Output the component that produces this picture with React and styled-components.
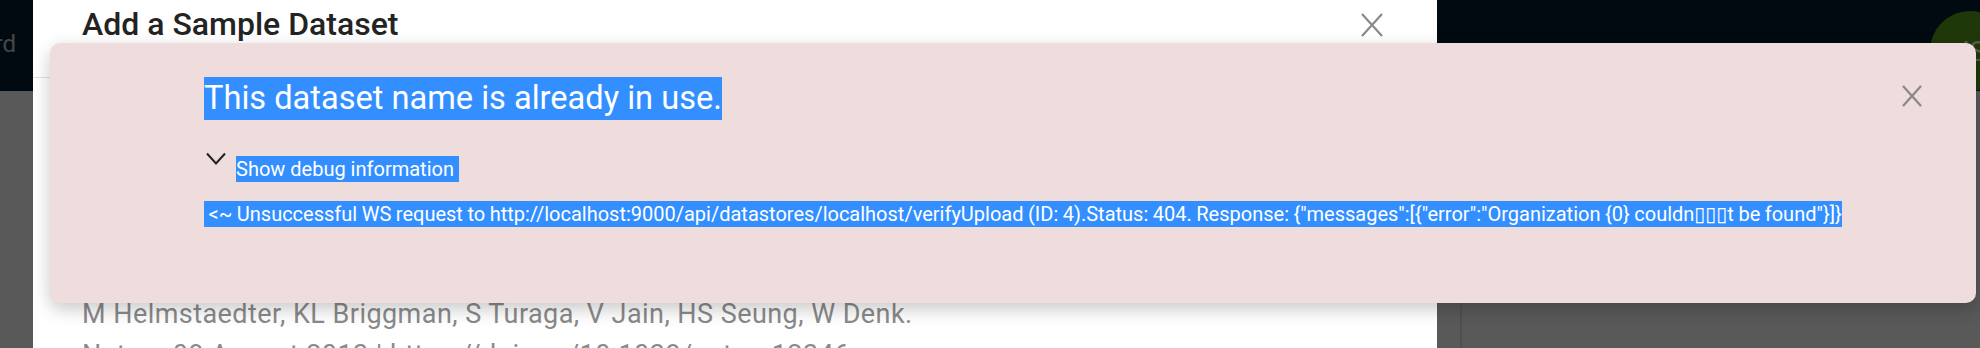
import React from "react";
import styled, { createGlobalStyle } from "styled-components";

const GlobalStyle = createGlobalStyle`
  html, body {
    margin: 0;
    padding: 0;
    overflow: hidden;
    background: #ffffff;
    font-family: Roboto, "Noto Sans", "DejaVu Sans", sans-serif;
  }
`;

const Page = styled.div`
  position: relative;
  width: 1980px;
  height: 348px;
  overflow: hidden;
  display: flex;
  flex-direction: column;
`;

const Navbar = styled.header`
  height: 91px;
  flex: none;
  background: #061d33;
  display: flex;
  align-items: flex-start;
  position: relative;
`;

const NavLinkBox = styled.div`
  width: 16px;
  display: flex;
  justify-content: flex-end;
  padding-top: 30px;
`;

const NavLink = styled.span`
  white-space: nowrap;
  font-size: 24px;
  line-height: 28px;
  color: #c4cad2;
`;

const Avatar = styled.div`
  position: absolute;
  left: 1930px;
  top: 11px;
  width: 80px;
  height: 80px;
  border-radius: 50%;
  background: #5aa21a;
  color: #ffffff;
  font-size: 28px;
  display: flex;
  align-items: center;
  padding-left: 24px;
  box-sizing: border-box;
`;

const Content = styled.main`
  flex: 1;
  background: #ffffff;
  display: flex;
  justify-content: flex-end;
`;

const SideBorder = styled.div`
  width: 518px;
  border-left: 2px solid #e6e6e6;
`;

const Overlay = styled.div`
  position: absolute;
  inset: 0;
  background: rgba(0, 0, 0, 0.65);
`;

const Modal = styled.section`
  position: absolute;
  left: 33px;
  top: 0;
  width: 1404px;
  height: 420px;
  background: #ffffff;
  display: flex;
  flex-direction: column;
`;

const ModalHeader = styled.div`
  height: 77px;
  border-bottom: 1px solid #e2e2e2;
  display: flex;
  align-items: flex-start;
  justify-content: space-between;
  padding: 0 54px 0 49px;
`;

const ModalTitle = styled.h2`
  margin: 0;
  font-size: 32px;
  line-height: 48px;
  font-weight: 500;
  color: #232323;
`;

const CloseButton = styled.button`
  border: none;
  background: none;
  padding: 0;
  margin-top: ${(p) => p.$top}px;
  width: ${(p) => p.$w}px;
  height: ${(p) => p.$h}px;
  display: flex;
  cursor: pointer;
`;

const ModalBody = styled.div`
  padding: 216px 49px 0 49px;
`;

const Authors = styled.p`
  margin: 0;
  font-size: 27px;
  line-height: 41px;
  letter-spacing: 0.45px;
  color: #8a8a8a;
  white-space: nowrap;
`;

const Toast = styled.div`
  position: absolute;
  left: 50px;
  top: 43px;
  width: 1926px;
  height: 260px;
  box-sizing: border-box;
  background: #efdddd;
  border-radius: 10px;
  box-shadow: 0 6px 18px rgba(0, 0, 0, 0.22);
  display: flex;
  padding: 34px 54px 0 154px;
`;

const ToastContent = styled.div`
  flex: 1;
  display: flex;
  flex-direction: column;
  align-items: flex-start;
`;

const Selected = styled.span`
  display: inline-block;
  background: #338fff;
  color: #ffffff;
  white-space: pre;
  font-size: ${(p) => p.$size}px;
  line-height: ${(p) => p.$lh}px;
  word-spacing: ${(p) => p.$ws || 0}px;
`;

const ToastTitle = styled.div`
  margin-bottom: 32px;
`;

const DebugToggle = styled.div`
  display: flex;
  align-items: flex-start;
  gap: 10px;
  margin-left: 2px;
  cursor: pointer;
  & > span {
    margin-top: 4px;
  }
`;

const DebugText = styled.div`
  margin-top: 19px;
`;

function CrossIcon({ w, h, color }) {
  return (
    <svg width={w} height={h} viewBox={`0 0 ${w} ${h}`}>
      <path
        d={`M1 1 L${w - 1} ${h - 1} M${w - 1} 1 L1 ${h - 1}`}
        stroke={color}
        strokeWidth="2.2"
        fill="none"
      />
    </svg>
  );
}

function Chevron() {
  return (
    <svg width="20" height="13" viewBox="0 0 20 13">
      <path d="M1 1.5 L10 11.5 L19 1.5" stroke="#222" strokeWidth="2" fill="none" />
    </svg>
  );
}

const debugMessage =
  ' <~ Unsuccessful WS request to http://localhost:9000/api/datastores/localhost/verifyUpload (ID: 4).Status: 404. Response: {"messages":[{"error":"Organization {0} couldn\u25AF\u25AF\u25AFt be found"}]}';

export default function App() {
  return (
    <>
      <GlobalStyle />
      <Page>
        <Navbar>
          <NavLinkBox>
            <NavLink>Dashboard</NavLink>
          </NavLinkBox>
          <Avatar>JS</Avatar>
        </Navbar>
        <Content>
          <SideBorder />
        </Content>
        <Overlay />
        <Modal>
          <ModalHeader>
            <ModalTitle>Add a Sample Dataset</ModalTitle>
            <CloseButton $top={13} $w={22} $h={24}>
              <CrossIcon w={22} h={24} color="#8a8a8a" />
            </CloseButton>
          </ModalHeader>
          <ModalBody>
            <Authors>M Helmstaedter, KL Briggman, S Turaga, V Jain, HS Seung, W Denk.</Authors>
            <Authors>Nature 08 August 2013 | https://doi.org/10.1038/nature12346</Authors>
          </ModalBody>
        </Modal>
        <Toast>
          <ToastContent>
            <ToastTitle>
              <Selected $size={32.6} $lh={43}>This dataset name is already in use.</Selected>
            </ToastTitle>
            <DebugToggle>
              <Chevron />
              <Selected $size={20} $lh={26}>Show debug information </Selected>
            </DebugToggle>
            <DebugText>
              <Selected $size={20} $lh={26} $ws={-0.45}>{debugMessage}</Selected>
            </DebugText>
          </ToastContent>
          <CloseButton $top={8} $w={20} $h={22}>
            <CrossIcon w={20} h={22} color="#888888" />
          </CloseButton>
        </Toast>
      </Page>
    </>
  );
}
